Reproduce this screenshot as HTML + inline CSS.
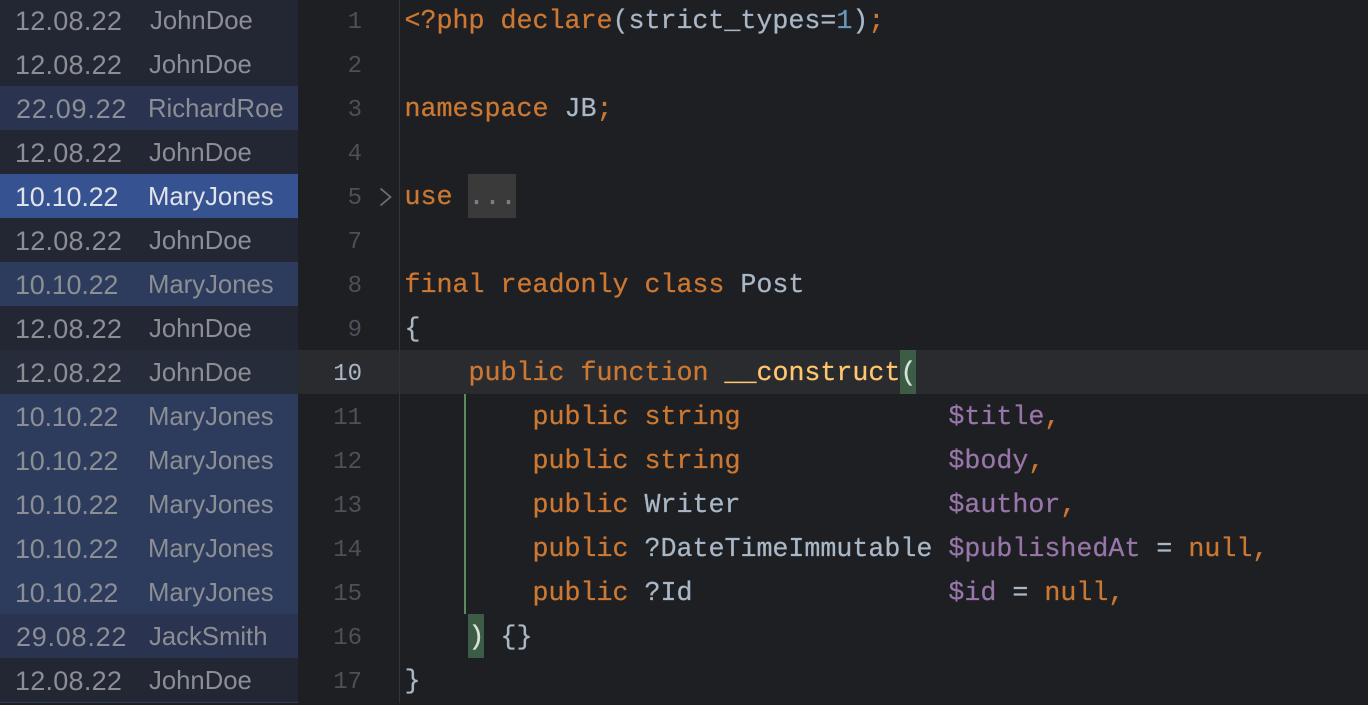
<!DOCTYPE html>
<html><head><meta charset="utf-8"><style>
html,body{margin:0;padding:0;width:1368px;height:703px;overflow:hidden;background:#1e1f22}
.a{position:absolute}
.r{position:absolute;left:0;width:298px;height:44px}
.d,.n{position:absolute;top:1px;line-height:44px;font-family:"Liberation Sans",sans-serif;color:#8b8e94;white-space:pre}
.d{font-size:27px;letter-spacing:.25px}
.d.t{letter-spacing:-.25px}
.d.w{letter-spacing:.75px}
.n{font-size:25.7px}
.l{position:absolute;left:298px;width:64px;height:44px;margin-top:3px;text-align:right;font:24px/44px "Liberation Mono",monospace;color:#4b5059}
.c{position:absolute;left:404.500px;height:44px;margin-top:2px;font:26.667px/44px "Liberation Mono",monospace;color:#a9b7c6;white-space:pre;-webkit-text-stroke:.25px currentColor}
.k{color:#cc7832}.f{color:#ffc66d}.v{color:#9876aa}.b{color:#6897bb}
</style></head><body>
<div class="a" style="left:0;top:0;width:298px;height:703px;background:#222733"></div>

<div class="r" style="top:-2px;background:#222733"><span class="d" style="left:15px">12.08.22</span><span class="n" style="left:150px">JohnDoe</span></div>
<div class="r" style="top:42px;background:#222733"><span class="d" style="left:15px">12.08.22</span><span class="n" style="left:149px">JohnDoe</span></div>
<div class="r" style="top:86px;background:#2a3450"><span class="d w" style="left:16px">22.09.22</span><span class="n" style="left:148px">RichardRoe</span></div>
<div class="r" style="top:130px;background:#222733"><span class="d" style="left:15px">12.08.22</span><span class="n" style="left:149px">JohnDoe</span></div>
<div class="r" style="top:174px;background:#375290"><span class="d t" style="left:15px;color:#dfe3ea">10.10.22</span><span class="n" style="left:148px;color:#dfe3ea">MaryJones</span></div>
<div class="r" style="top:218px;background:#222733"><span class="d" style="left:15px">12.08.22</span><span class="n" style="left:149px">JohnDoe</span></div>
<div class="r" style="top:262px;background:#2d3b5c"><span class="d t" style="left:15px">10.10.22</span><span class="n" style="left:148px">MaryJones</span></div>
<div class="r" style="top:306px;background:#222733"><span class="d" style="left:15px">12.08.22</span><span class="n" style="left:149px">JohnDoe</span></div>
<div class="r" style="top:350px;background:#262c3a"><span class="d" style="left:15px">12.08.22</span><span class="n" style="left:149px">JohnDoe</span></div>
<div class="r" style="top:394px;background:#2d3b5c"><span class="d t" style="left:15px">10.10.22</span><span class="n" style="left:148px">MaryJones</span></div>
<div class="r" style="top:438px;background:#2d3b5c"><span class="d t" style="left:15px">10.10.22</span><span class="n" style="left:148px">MaryJones</span></div>
<div class="r" style="top:482px;background:#2d3b5c"><span class="d t" style="left:15px">10.10.22</span><span class="n" style="left:148px">MaryJones</span></div>
<div class="r" style="top:526px;background:#2d3b5c"><span class="d t" style="left:15px">10.10.22</span><span class="n" style="left:148px">MaryJones</span></div>
<div class="r" style="top:570px;background:#2d3b5c"><span class="d t" style="left:15px">10.10.22</span><span class="n" style="left:148px">MaryJones</span></div>
<div class="r" style="top:614px;background:#2a3450"><span class="d w" style="left:16px">29.08.22</span><span class="n" style="left:149px">JackSmith</span></div>
<div class="r" style="top:658px;background:#222733"><span class="d" style="left:15px">12.08.22</span><span class="n" style="left:149px">JohnDoe</span></div>
<div class="a" style="left:0;top:702px;width:298px;height:1px;background:#2d3b5c"></div>

<div class="a" style="left:298px;top:350px;width:1070px;height:44px;background:#2a2b2f"></div>
<div class="a" style="left:398.500px;top:0;width:1.500px;height:703px;background:#313438"></div>
<div class="a" style="left:900px;top:350px;width:16px;height:44px;background:#3d5c45"></div>
<div class="a" style="left:468px;top:614px;width:16px;height:44px;background:#3d5c45"></div>
<div class="a" style="left:468px;top:174px;width:48px;height:44px;background:#3a3a3a"></div>
<div class="a" style="left:464px;top:394px;width:2px;height:220px;background:#5a8a60"></div>
<svg class="a" style="left:376px;top:184px" width="20" height="24" viewBox="0 0 20 24"><path d="M4.500 4.500L14.500 13L4.500 21.500" fill="none" stroke="#6a6e75" stroke-width="1.800"/></svg>

<div class="l" style="top:-2px">1</div>
<div class="l" style="top:42px">2</div>
<div class="l" style="top:86px">3</div>
<div class="l" style="top:130px">4</div>
<div class="l" style="top:174px">5</div>
<div class="l" style="top:218px">7</div>
<div class="l" style="top:262px">8</div>
<div class="l" style="top:306px">9</div>
<div class="l" style="top:350px;color:#a9b7c6">10</div>
<div class="l" style="top:394px">11</div>
<div class="l" style="top:438px">12</div>
<div class="l" style="top:482px">13</div>
<div class="l" style="top:526px">14</div>
<div class="l" style="top:570px">15</div>
<div class="l" style="top:614px">16</div>
<div class="l" style="top:658px">17</div>

<div class="c" style="top:-2px"><span class="k">&lt;?php declare</span>(strict_types=<span class="b">1</span>)<span class="k">;</span></div>
<div class="c" style="top:86px"><span class="k">namespace</span> JB<span class="k">;</span></div>
<div class="c" style="top:174px"><span class="k">use</span> <span style="color:#7a7e85">...</span></div>
<div class="c" style="top:262px"><span class="k">final readonly class</span> Post</div>
<div class="c" style="top:306px">{</div>
<div class="c" style="top:350px">    <span class="k">public function</span> <span class="f">__construct</span><span style="color:#d5e4d8">(</span></div>
<div class="c" style="top:394px">        <span class="k">public string</span>             <span class="v">$title</span><span class="k">,</span></div>
<div class="c" style="top:438px">        <span class="k">public string</span>             <span class="v">$body</span><span class="k">,</span></div>
<div class="c" style="top:482px">        <span class="k">public</span> Writer             <span class="v">$author</span><span class="k">,</span></div>
<div class="c" style="top:526px">        <span class="k">public</span> ?DateTimeImmutable <span class="v">$publishedAt</span> = <span class="k">null,</span></div>
<div class="c" style="top:570px">        <span class="k">public</span> ?Id                <span class="v">$id</span> = <span class="k">null,</span></div>
<div class="c" style="top:614px">    <span style="color:#d5e4d8">)</span> {}</div>
<div class="c" style="top:658px">}</div>
</body></html>
